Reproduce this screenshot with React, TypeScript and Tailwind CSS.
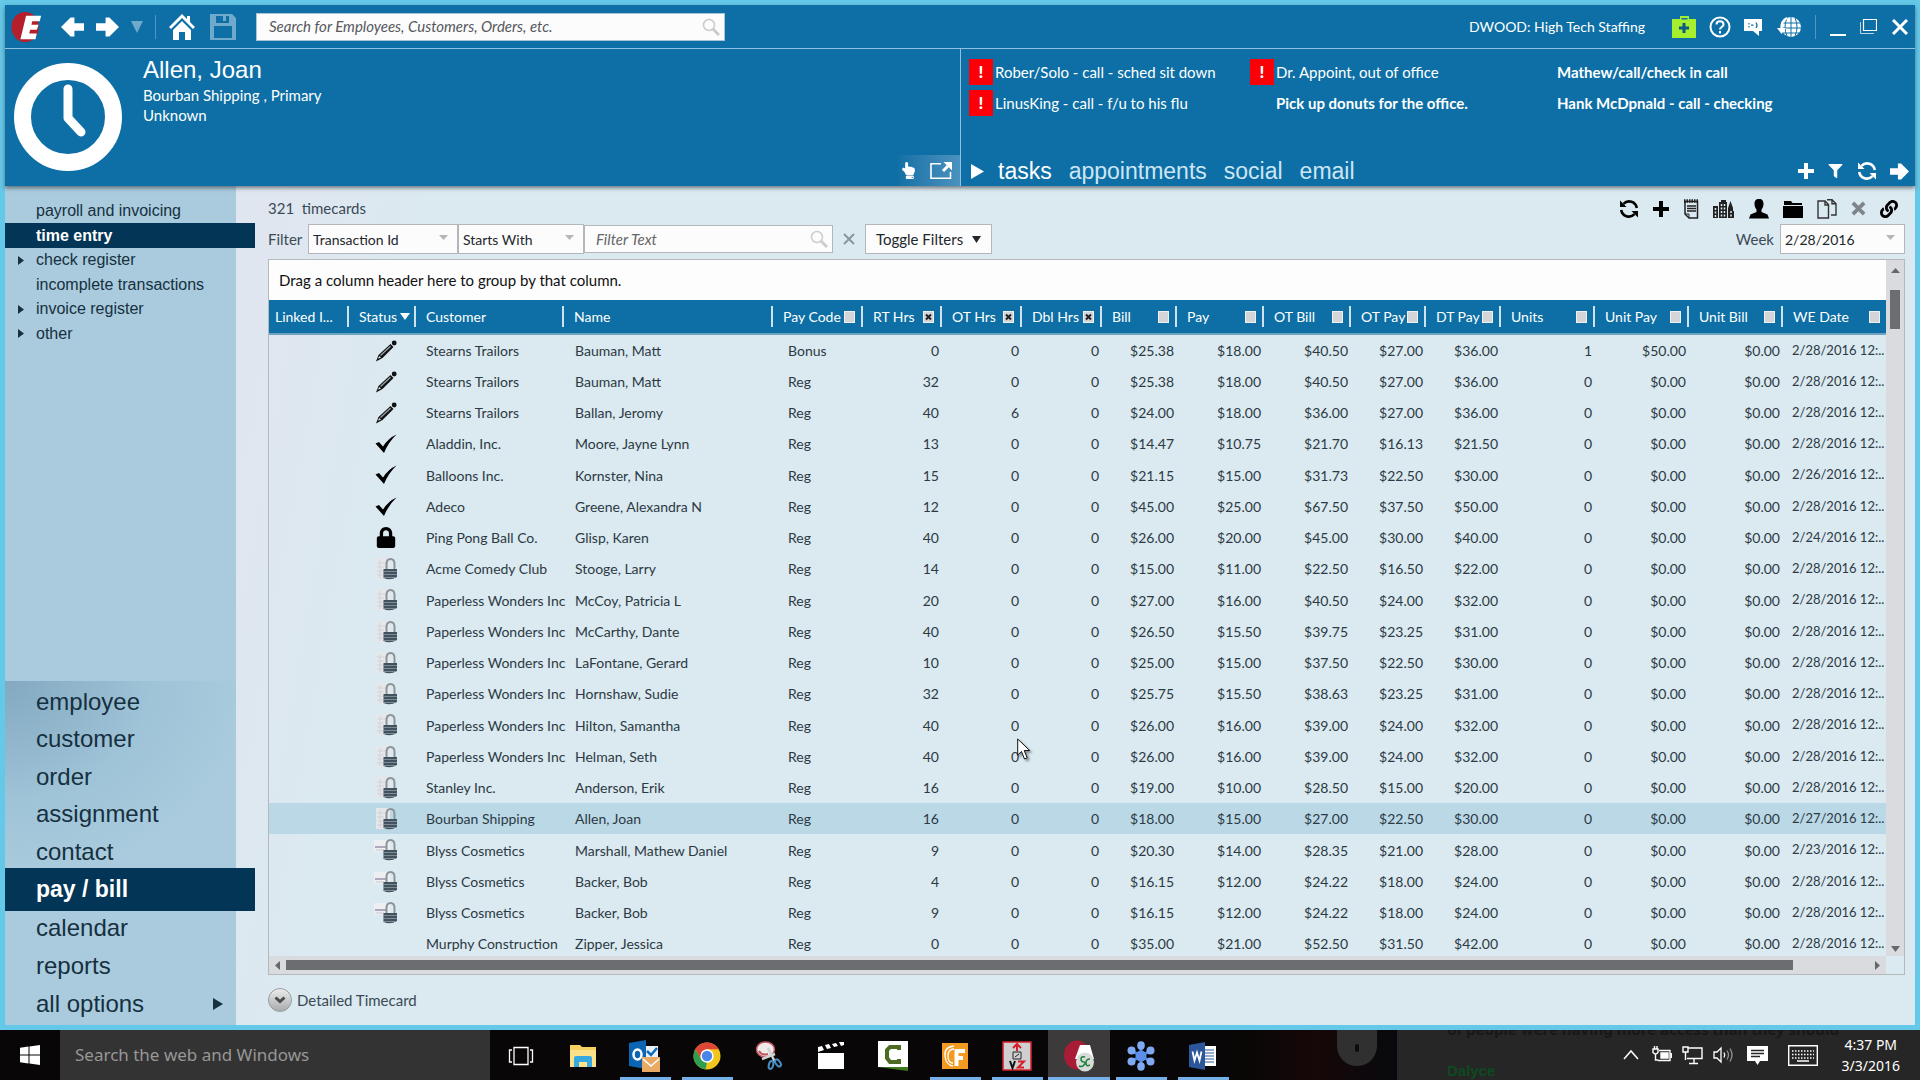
import React from "react";
import { FaFilter, FaFolder, FaHandPointUp, FaLink, FaLock } from "react-icons/fa";

type IconProps = { className?: string };

const ArrowLeft = ({ className }: IconProps) => (
  <svg viewBox="0 0 24 20" className={className} fill="currentColor" aria-hidden="true">
    <path d="M0 10 10 0h4v6h10v8H14v6h-4z" />
  </svg>
);
const ArrowRight = ({ className }: IconProps) => (
  <svg viewBox="0 0 24 20" className={className} fill="currentColor" aria-hidden="true">
    <path d="M24 10 14 0h-4v6H0v8h10v6h4z" />
  </svg>
);
const TriDown = ({ className }: IconProps) => (
  <svg viewBox="0 0 10 8" className={className} fill="currentColor" aria-hidden="true" preserveAspectRatio="none">
    <path d="M0 0h10L5 8z" />
  </svg>
);
const TriRight = ({ className }: IconProps) => (
  <svg viewBox="0 0 8 10" className={className} fill="currentColor" aria-hidden="true" preserveAspectRatio="none">
    <path d="M0 0v10l8-5z" />
  </svg>
);
const Plus = ({ className }: IconProps) => (
  <svg viewBox="0 0 16 16" className={className} fill="currentColor" aria-hidden="true">
    <path d="M6 0h4v6h6v4h-6v6H6v-6H0V6h6z" />
  </svg>
);
const Sync = ({ className }: IconProps) => (
  <svg viewBox="0 0 20 20" className={className} fill="none" stroke="currentColor" strokeWidth="2.6" aria-hidden="true">
    <path d="M4.500 4.800A7.800 7.800 0 0 1 17.800 9" />
    <path d="M15.500 15.200A7.800 7.800 0 0 1 2.200 11" />
    <path d="M1 1.500v6.500h6.500z" fill="currentColor" stroke="none" />
    <path d="M19 18.500v-6.500h-6.500z" fill="currentColor" stroke="none" />
  </svg>
);
const Magnifier = ({ className }: IconProps) => (
  <svg viewBox="0 0 18 18" className={className} fill="none" stroke="currentColor" aria-hidden="true">
    <circle cx="7" cy="7" r="5.500" strokeWidth="1.500" />
    <path d="m11 11 6 6" strokeWidth="3" />
  </svg>
);

function EmpireLogo() {
  return (
    <svg viewBox="0 0 34 34" className="h-8 w-8" aria-hidden="true">
      <ellipse cx="15" cy="17" rx="14.500" ry="16" fill="#b3202c" />
      <path d="M16 5h16l-1.500 6h-8l-.8 3.500h7.500L27.500 20h-7.200l-.9 4h8L26 30H10z" fill="#fff" />
    </svg>
  );
}

function HomeIcon() {
  return (
    <svg viewBox="0 0 28 28" className="h-7 w-7" fill="#fff" aria-hidden="true">
      <path d="M14 1 1 14l2 2L14 5l11 11 2-2-5-5V3h-3v3z" />
      <path d="m14 8-9 9v10h6v-8h6v8h6V17z" />
    </svg>
  );
}

function SaveIcon() {
  return (
    <svg viewBox="0 0 26 26" className="h-[26px] w-[26px]" aria-hidden="true">
      <path fillRule="evenodd" d="M0 0h22l4 4v22H0zM6 2v7h13V2h-3v5h-3V2zM4 12v12h18V12z" fill="#6fa9cb" />
    </svg>
  );
}

function ClockIcon() {
  return (
    <svg viewBox="0 0 108 108" className="h-[108px] w-[108px]" fill="none" stroke="#fff" aria-hidden="true">
      <circle cx="54" cy="54" r="45.500" strokeWidth="17" />
      <path d="M54 26v29l13 14" strokeWidth="9" strokeLinecap="round" strokeLinejoin="round" />
    </svg>
  );
}

const iconBtn = "flex items-center justify-center";

function TitleBar() {
  return (
    <div className="flex h-11 items-center border-b border-[#8fc0dc] pr-[7px] pl-[6px] text-white">
      <EmpireLogo />
      <button aria-label="Back" className={`${iconBtn} ml-[18px]`}><ArrowLeft className="h-5 w-[23px]" /></button>
      <button aria-label="Forward" className={`${iconBtn} ml-3`}><ArrowRight className="h-5 w-[23px]" /></button>
      <button aria-label="History" className={`${iconBtn} ml-3 text-[#6fa9cb]`}><TriDown className="h-3 w-3" /></button>
      <span className="ml-3 h-6 w-px bg-[#4d97c0]" />
      <button aria-label="Home" className={`${iconBtn} ml-3`}><HomeIcon /></button>
      <button aria-label="Save" className={`${iconBtn} ml-[14px]`}><SaveIcon /></button>
      <label className="ml-5 flex h-7 w-[469px] items-center border border-[#a9c4d4] bg-[#fcfcfc] pr-1 pl-3 text-[#c9cbcf]">
        <input
          aria-label="Search"
          placeholder="Search for Employees, Customers, Orders, etc."
          className="min-w-0 flex-1 bg-transparent text-[15px] text-gray-700 italic outline-none placeholder:text-[#55585c]"
        />
        <Magnifier className="h-[18px] w-[18px]" />
      </label>
      <span className="ml-auto text-[14px]">DWOOD: High Tech Staffing</span>
      <button aria-label="Support kit" className={`${iconBtn} ml-[26px]`}>
        <svg viewBox="0 0 26 22" className="h-[22px] w-[26px]" aria-hidden="true">
          <path d="M1 3h8V0h9v3h7v19H1z" fill="#a5ef2f" />
          <path d="M10.500 2h6v1.500h-6z" fill="#0d6fa5" />
          <path d="M11.500 7h3v3.500H18v3h-3.500V17h-3v-3.500H8v-3h3.500z" fill="#0d5a85" />
        </svg>
      </button>
      <button aria-label="Help" className={`${iconBtn} ml-3`}>
        <svg viewBox="0 0 22 22" className="h-[22px] w-[22px]" fill="none" stroke="#fff" strokeWidth="2" aria-hidden="true">
          <circle cx="11" cy="11" r="9.500" />
          <path d="M7.500 8.500c0-4.500 7-4.500 7 0 0 2.500-3.500 2.500-3.500 5" />
          <path d="M11 15v2.500" />
        </svg>
      </button>
      <button aria-label="Chat" className={`${iconBtn} ml-3`}>
        <svg viewBox="0 0 20 18" className="h-[18px] w-5" aria-hidden="true">
          <path d="M1 1h18v12h-3v5l-6-5H1z" fill="#fff" />
          <path d="M6 5v1.500M6 8v1.500M8 7.200h2.500M13 4.500q2 2.700 0 5.500" stroke="#0d6fa5" fill="none" strokeWidth="1.200" />
        </svg>
      </button>
      <button aria-label="Web" className={`${iconBtn} ml-[14px]`}>
        <svg viewBox="0 0 24 22" className="h-[22px] w-6" aria-hidden="true">
          <circle cx="14" cy="11" r="10" fill="#fff" />
          <path d="M14 1v20M5 7h18M4 12h20M6 17h16M10 2q-4 9 0 18M18 2q4 9 0 18" stroke="#0d6fa5" fill="none" />
          <path d="M0 12h9l-4.500 6z" fill="#fff" />
          <path d="M4.500 13Q4 5 10 2" stroke="#fff" strokeWidth="2.500" fill="none" />
        </svg>
      </button>
      <span className="ml-[14px] h-6 w-px bg-[#4d97c0]" />
      <button aria-label="Minimize" className="ml-[14px] flex h-[18px] w-4 items-end"><span className="h-[2px] w-full bg-white" /></button>
      <button aria-label="Restore" className={`${iconBtn} ml-[14px]`}>
        <svg viewBox="0 0 17 15" className="h-[15px] w-[17px]" fill="none" stroke="#fff" aria-hidden="true">
          <path d="M3.500.5h13v11h-13z" strokeWidth="1.200" />
          <path d="M.5 3v11.500h13.500" opacity=".7" />
        </svg>
      </button>
      <button aria-label="Close" className={`${iconBtn} ml-[15px]`}>
        <svg viewBox="0 0 16 16" className="h-4 w-4" stroke="#fff" strokeWidth="3" aria-hidden="true"><path d="m1 1 14 14M15 1 1 15" /></svg>
      </button>
    </div>
  );
}

const tasks = [
  { text: "Rober/Solo - call - sched sit down", urgent: true, bold: false },
  { text: "Dr. Appoint, out of office", urgent: true, bold: false },
  { text: "Mathew/call/check in call", urgent: false, bold: true },
  { text: "LinusKing - call - f/u to his flu", urgent: true, bold: false },
  { text: "Pick up donuts for the office.", urgent: false, bold: true },
  { text: "Hank McDpnald - call - checking", urgent: false, bold: true },
];

function Header() {
  return (
    <header className="relative z-10 bg-[#0d6fa5] text-white shadow-[0_2px_4px_rgba(60,70,80,0.7)]">
      <TitleBar />
      <div className="flex h-[137px]">
        <section className="flex w-1/2 items-start pl-[9px]">
          <div className="pt-[14px]"><ClockIcon /></div>
          <div className="flex-1 pt-[6px] pl-[21px]">
            <h1 className="font-['Liberation_Sans',sans-serif] text-[24px] leading-[30px]">Allen, Joan</h1>
            <p className="text-[15px] leading-5">Bourban Shipping , Primary</p>
            <p className="text-[15px] leading-5">Unknown</p>
          </div>
          <div className="flex h-[31px] w-16 items-center justify-between self-end bg-linear-to-r from-[#0d6fa5] to-[#4a92bf] pr-2 pl-[5px]">
            <button aria-label="Select"><FaHandPointUp className="h-[17px] w-[15px]" /></button>
            <button aria-label="Open in new window">
              <svg viewBox="0 0 22 18" className="h-[18px] w-[22px]" fill="none" stroke="#fff" aria-hidden="true">
                <path d="M11 1.700H1v14.500h19.500V10" strokeWidth="1.600" />
                <path d="m13 9 5-5" strokeWidth="3" />
                <path d="M13.500 0H22v8.500z" fill="#fff" stroke="none" />
              </svg>
            </button>
          </div>
        </section>
        <section className="flex flex-1 flex-col border-l border-[#8fc0dc] pl-2">
          <ul className="grid grid-cols-[281px_281px_1fr] gap-y-[5px] pt-[10px]">
            {tasks.map((t) => (
              <li key={t.text} className="flex h-[26px] items-center gap-[2px] text-[15px] whitespace-nowrap">
                {t.urgent ? (
                  <span className="flex h-[26px] w-6 items-center justify-center bg-[#fb0007] text-[17px] font-black">!</span>
                ) : (
                  <span className="w-6" />
                )}
                <span className={t.bold ? "font-bold" : ""}>{t.text}</span>
              </li>
            ))}
          </ul>
          <div className="mt-auto flex h-[30px] items-center pr-[6px] font-['Liberation_Sans',sans-serif] text-[23px] leading-[30px] text-[#cde6f5]">
            <button aria-label="Expand" className="mr-[14px] ml-[2px] text-white"><TriRight className="h-[15px] w-[13px]" /></button>
            <nav className="flex gap-[17px]">
              <a href="#tasks" className="text-white">tasks</a>
              <a href="#appointments">appointments</a>
              <a href="#social">social</a>
              <a href="#email">email</a>
            </nav>
            <div className="ml-auto flex items-center gap-[13px] text-white">
              <button aria-label="Add task"><Plus className="h-4 w-4" /></button>
              <button aria-label="Filter tasks"><FaFilter className="h-[14px] w-[17px]" /></button>
              <button aria-label="Refresh tasks"><Sync className="h-5 w-5" /></button>
              <button aria-label="Next"><ArrowRight className="h-[17px] w-[19px]" /></button>
            </div>
          </div>
        </section>
      </div>
    </header>
  );
}

const subNav = [
  { label: "payroll and invoicing", arrow: false },
  { label: "time entry", arrow: false, active: true },
  { label: "check register", arrow: true },
  { label: "incomplete transactions", arrow: false },
  { label: "invoice register", arrow: true },
  { label: "other", arrow: true },
];
const mainNav = ["employee", "customer", "order", "assignment", "contact", "pay / bill", "calendar", "reports", "all options"];

function Sidebar() {
  return (
    <aside className="flex w-[250px] flex-col bg-linear-to-r from-[#a9cbdd] from-[231px] to-transparent to-[231px] font-['Liberation_Sans',sans-serif] text-[#16303f]">
      <nav aria-label="Pay and bill" className="pt-[13px] text-[16px]">
        {subNav.map((s) => (
          <a
            key={s.label}
            href="#section"
            className={`flex items-center pl-[13px] even:h-[25px] odd:h-6 ${s.active ? "bg-[#033557] font-bold text-white" : ""}`}
          >
            <span className="w-[18px]">{s.arrow && <TriRight className="h-[9px] w-[6px]" />}</span>
            {s.label}
          </a>
        ))}
      </nav>
      <nav aria-label="Modules" className="mt-auto text-[24px]">
        <div className="w-[231px] bg-[radial-gradient(ellipse_at_top_left,#82a9c1_0%,#9fc3d7_45%,transparent_75%)]">
          {mainNav.slice(0, 5).map((m) => (
            <a key={m} href="#module" className="flex items-center pt-1 pl-[31px] even:h-[38px] odd:h-[37px]">{m}</a>
          ))}
        </div>
        <a href="#module" className="flex h-[43px] items-center bg-[#033557] pl-[31px] text-[23px] font-bold text-white">{mainNav[5]}</a>
        {mainNav.slice(6).map((m) => (
          <a key={m} href="#module" className="flex h-[38px] items-center justify-between pr-8 pb-1 pl-[31px]">
            {m}
            {m === "all options" && <TriRight className="h-3 w-[10px]" />}
          </a>
        ))}
      </nav>
    </aside>
  );
}

function Dropdown({ label, value, box }: { label: string; value: string; box: string }) {
  return (
    <span className={`relative flex h-[30px] ${box}`}>
      <select aria-label={label} className="w-full appearance-none border border-[#b4b7ba] bg-[#fcfcfc] pl-1 text-[14px] text-[#22272b]">
        <option>{value}</option>
      </select>
      <TriDown className="pointer-events-none absolute top-[11px] right-[10px] h-[5px] w-[9px] text-[#b5b5b5]" />
    </span>
  );
}

function Toolbar() {
  return (
    <div className="flex w-[279px] items-center justify-between text-black">
      <button aria-label="Refresh"><Sync className="h-5 w-5" /></button>
      <button aria-label="Add"><Plus className="h-4 w-4" /></button>
      <button aria-label="Notes">
        <svg viewBox="0 0 16 20" className="h-5 w-4" fill="none" stroke="#222" aria-hidden="true">
          <path d="M2 2.500h12.500v16.500H6L2 15z" strokeWidth="1.500" />
          <path d="M1 2h14" strokeWidth="3.500" strokeDasharray="1.500 1" />
          <path d="M4 7h9M4 9.500h9M4 12h9" strokeWidth="1.400" />
          <path d="M2 15h4v4" />
        </svg>
      </button>
      <button aria-label="Companies">
        <svg viewBox="0 0 21 20" className="h-5 w-[21px]" aria-hidden="true">
          <path d="M0 7h5v12H0zM6 3h2V1h5v2h1v16H6zM15 9l2.500-7L20 9v3h1v7h-6z" fill="#222" />
          <path d="M2.500 9v9M8.500 5v13M11.500 5v13M18 12v6" stroke="#dbe9f0" strokeWidth="1.500" strokeDasharray="2 1.500" />
        </svg>
      </button>
      <button aria-label="Employee">
        <svg viewBox="0 0 20 20" className="h-5 w-5" aria-hidden="true">
          <path d="M10 0c3.500 0 4.500 2 4.500 5 0 2.500-1 4.500-2 5.500v2.500l6 2.500 1.500 4H0l1.500-4 6-2.500v-2.500c-1-1-2-3-2-5.500 0-3 1-5 4.500-5z" />
        </svg>
      </button>
      <button aria-label="Folder">
        <svg viewBox="0 0 20 18" className="h-[18px] w-5" aria-hidden="true">
          <path d="M1 1h7l1.500 2H19v2H1zM0 6h20v12H0z" />
        </svg>
      </button>
      <button aria-label="Copy">
        <svg viewBox="0 0 20 20" className="h-5 w-5" fill="none" stroke="#333" strokeWidth="1.400" aria-hidden="true">
          <path d="M1 2h7l3.500 3.500V19H1zM8 2v4h3.500" />
          <path d="M10 .8h5l4 4V16h-5M15 .8v4h4" />
        </svg>
      </button>
      <button aria-label="Delete" className="text-[#7e8589]">
        <svg viewBox="0 0 16 16" className="h-[15px] w-[15px]" stroke="currentColor" strokeWidth="4" aria-hidden="true"><path d="m2 2 12 12M14 2 2 14" /></svg>
      </button>
      <button aria-label="Link"><FaLink className="h-[18px] w-[18px]" /></button>
    </div>
  );
}

type Col = { title: string; width: number; box?: "on" | "off"; sort?: boolean };
const columns: Col[] = [
  { title: "Linked I...", width: 80 },
  { title: "Status", width: 67, sort: true },
  { title: "Customer", width: 148 },
  { title: "Name", width: 209 },
  { title: "Pay Code", width: 90, box: "off" },
  { title: "RT Hrs", width: 79, box: "on" },
  { title: "OT Hrs", width: 80, box: "on" },
  { title: "Dbl Hrs", width: 80, box: "on" },
  { title: "Bill", width: 75, box: "off" },
  { title: "Pay", width: 87, box: "off" },
  { title: "OT Bill", width: 87, box: "off" },
  { title: "OT Pay", width: 75, box: "off" },
  { title: "DT Pay", width: 75, box: "off" },
  { title: "Units", width: 94, box: "off" },
  { title: "Unit Pay", width: 94, box: "off" },
  { title: "Unit Bill", width: 94, box: "off" },
  { title: "WE Date", width: 103, box: "off" },
];

// status | customer | name | code | rt | ot | dbl | bill | pay | ot bill | ot pay | dt pay | units | unit pay | unit bill | date
const rows = `edit|Stearns Trailors|Bauman, Matt|Bonus|0|0|0|$25.38|$18.00|$40.50|$27.00|$36.00|1|$50.00|$0.00|2/28/2016 12:..
edit|Stearns Trailors|Bauman, Matt|Reg|32|0|0|$25.38|$18.00|$40.50|$27.00|$36.00|0|$0.00|$0.00|2/28/2016 12:..
edit|Stearns Trailors|Ballan, Jeromy|Reg|40|6|0|$24.00|$18.00|$36.00|$27.00|$36.00|0|$0.00|$0.00|2/28/2016 12:..
check|Aladdin, Inc.|Moore, Jayne Lynn|Reg|13|0|0|$14.47|$10.75|$21.70|$16.13|$21.50|0|$0.00|$0.00|2/28/2016 12:..
check|Balloons Inc.|Kornster, Nina|Reg|15|0|0|$21.15|$15.00|$31.73|$22.50|$30.00|0|$0.00|$0.00|2/26/2016 12:..
check|Adeco|Greene, Alexandra N|Reg|12|0|0|$45.00|$25.00|$67.50|$37.50|$50.00|0|$0.00|$0.00|2/28/2016 12:..
lock|Ping Pong Ball Co.|Glisp, Karen|Reg|40|0|0|$26.00|$20.00|$45.00|$30.00|$40.00|0|$0.00|$0.00|2/24/2016 12:..
page|Acme Comedy Club|Stooge, Larry|Reg|14|0|0|$15.00|$11.00|$22.50|$16.50|$22.00|0|$0.00|$0.00|2/28/2016 12:..
page|Paperless Wonders Inc|McCoy, Patricia L|Reg|20|0|0|$27.00|$16.00|$40.50|$24.00|$32.00|0|$0.00|$0.00|2/28/2016 12:..
page|Paperless Wonders Inc|McCarthy, Dante|Reg|40|0|0|$26.50|$15.50|$39.75|$23.25|$31.00|0|$0.00|$0.00|2/28/2016 12:..
page|Paperless Wonders Inc|LaFontane, Gerard|Reg|10|0|0|$25.00|$15.00|$37.50|$22.50|$30.00|0|$0.00|$0.00|2/28/2016 12:..
page|Paperless Wonders Inc|Hornshaw, Sudie|Reg|32|0|0|$25.75|$15.50|$38.63|$23.25|$31.00|0|$0.00|$0.00|2/28/2016 12:..
page|Paperless Wonders Inc|Hilton, Samantha|Reg|40|0|0|$26.00|$16.00|$39.00|$24.00|$32.00|0|$0.00|$0.00|2/28/2016 12:..
page|Paperless Wonders Inc|Helman, Seth|Reg|40|0|0|$26.00|$16.00|$39.00|$24.00|$32.00|0|$0.00|$0.00|2/28/2016 12:..
page|Stanley Inc.|Anderson, Erik|Reg|16|0|0|$19.00|$10.00|$28.50|$15.00|$20.00|0|$0.00|$0.00|2/28/2016 12:..
page|Bourban Shipping|Allen, Joan|Reg|16|0|0|$18.00|$15.00|$27.00|$22.50|$30.00|0|$0.00|$0.00|2/27/2016 12:..
check-page|Blyss Cosmetics|Marshall, Mathew Daniel|Reg|9|0|0|$20.30|$14.00|$28.35|$21.00|$28.00|0|$0.00|$0.00|2/23/2016 12:..
check-page|Blyss Cosmetics|Backer, Bob|Reg|4|0|0|$16.15|$12.00|$24.22|$18.00|$24.00|0|$0.00|$0.00|2/28/2016 12:..
check-page|Blyss Cosmetics|Backer, Bob|Reg|9|0|0|$16.15|$12.00|$24.22|$18.00|$24.00|0|$0.00|$0.00|2/28/2016 12:..
|Murphy Construction|Zipper, Jessica|Reg|0|0|0|$35.00|$21.00|$52.50|$31.50|$42.00|0|$0.00|$0.00|2/28/2016 12:..`
  .split("\n")
  .map((line) => line.split("|"));

function StatusIcon({ kind }: { kind: string }) {
  if (kind === "edit")
    return (
      <svg viewBox="0 0 22 22" className="h-[22px] w-[22px]" aria-hidden="true">
        <path d="M1 21.500 3.500 15 15.500 4 18.500 7 7.500 18z" fill="#111" />
        <path d="m5.500 15.500 10-9.300" stroke="#9aa6ac" strokeWidth="1.200" />
        <path d="m3 18.500 1.200-2.500 1.800 1.800z" fill="#dbe9f0" />
        <circle cx="19.200" cy="3" r="2.400" fill="#111" />
      </svg>
    );
  if (kind === "check")
    return (
      <svg viewBox="0 0 22 20" className="h-5 w-[22px]" aria-hidden="true">
        <path d="M.5 9.500 4 8l4 4.500Q13.500 4 21.500.5 13.500 8 9 19z" />
      </svg>
    );
  if (kind === "lock") return <FaLock className="h-[21px] w-[22px] text-black" />;
  if (kind === "") return null;
  return (
    <svg viewBox="0 0 24 24" className="h-6 w-6" fill="none" aria-hidden="true">
      {kind === "page" ? (
        <>
          <path d="M2 1h14v21H2z" fill="#e6e7ea" />
          <path d="M3 6h9M3 10h7M3 14h6M3 18h6M6 3v18" stroke="#d0d4d8" />
        </>
      ) : (
        <>
          <path d="M0 2h16v12H0z" fill="#edeef2" />
          <path d="M1 9h11" stroke="#9a8fa8" strokeWidth="1.500" />
          <path d="M2 12h8" stroke="#c9ccd2" />
        </>
      )}
      <path d="M12.500 13V7q0-5 4-5t4 5v6" stroke="#8c9499" strokeWidth="2" />
      <path d="M9.500 12H23v8q-7 4-13.500 1z" fill="#42535f" />
      <path d="M10 14.500h13M10 17.500h13M10 20.500h12" stroke="#7d8c97" />
    </svg>
  );
}

function HeaderBox({ title, checked }: { title: string; checked: boolean }) {
  return (
    <span className="relative ml-auto h-3 w-[11px] shrink-0">
      <input
        type="checkbox"
        aria-label={`Total ${title}`}
        defaultChecked={checked}
        className="block h-3 w-[11px] appearance-none border border-[#eef0f2] bg-[#d3d5d8]"
      />
      {checked && (
        <svg viewBox="0 0 11 12" className="pointer-events-none absolute inset-0 h-3 w-[11px]" stroke="#222" strokeWidth="2" aria-hidden="true">
          <path d="m3 3.500 5 5M8 3.500l-5 5" />
        </svg>
      )}
    </span>
  );
}

const total = columns.reduce((sum, c) => sum + c.width, 0);

function Grid() {
  return (
    <div className="flex min-h-0 flex-1 flex-col border border-[#b4b9bc]">
      <div className="flex min-h-0 flex-1">
        <div className="min-w-0 flex-1 overflow-hidden">
          <p className="flex h-10 items-center bg-[#fdfdfd] pl-[10px] text-[15px] text-[#111]">
            Drag a column header here to group by that column.
          </p>
          <table className="w-full table-fixed border-collapse text-[14px]">
            <colgroup>
              {columns.map((c) => (
                <col key={c.title} style={{ width: `${(c.width / total) * 100}%` }} />
              ))}
            </colgroup>
            <thead>
              <tr className="h-[34px] border-b-2 border-[#6fa3c2] bg-[#0d6fa5] text-white">
                {columns.map((c, i) => (
                  <th key={c.title} className="p-0 text-left font-normal">
                    <span
                      className={`flex h-[21px] items-center pr-[6px] whitespace-nowrap ${i === 0 ? "pl-[6px]" : "pl-[10px]"} ${
                        i < columns.length - 1 ? "border-r-2 border-[#cfe3ef]" : ""
                      }`}
                    >
                      {c.title}
                      {c.sort && <TriDown className="ml-[3px] h-[7px] w-[10px] shrink-0" />}
                      {c.box && <HeaderBox title={c.title} checked={c.box === "on"} />}
                    </span>
                  </th>
                ))}
              </tr>
            </thead>
            <tbody className="text-[#2b3a44]">
              {rows.map((r, i) => (
                <tr key={i} className={`h-[31px] [&:nth-child(4n+1)]:h-8 ${i === 15 ? "bg-[#bbd8e6]" : ""}`}>
                  <td />
                  <td className="p-0">
                    <span className="flex justify-center pl-[6px]"><StatusIcon kind={r[0]} /></span>
                  </td>
                  <td className="p-0 pl-[10px] whitespace-nowrap">{r[1]}</td>
                  <td className="truncate p-0 pl-[11px]">{r[2]}</td>
                  <td className="truncate p-0 pl-[15px]">{r[3]}</td>
                  {r.slice(4, 15).map((v, j) => (
                    <td key={j} className="p-0 pr-[3px] text-right">{v}</td>
                  ))}
                  <td className="p-0 pl-[9px] text-[13px] whitespace-nowrap">{r[15]}</td>
                </tr>
              ))}
            </tbody>
          </table>
        </div>
        <div className="flex w-[18px] flex-col items-center bg-[#d9dbdf] pt-2 pb-1 text-[#66696c]">
          <TriDown className="h-[5px] w-[9px] rotate-180" />
          <div className="mt-[17px] h-[39px] w-[10px] bg-[#6b6d70]" />
          <TriDown className="mt-auto h-[6px] w-[9px]" />
        </div>
      </div>
      <div className="flex h-[18px]">
        <div className="flex flex-1 items-center bg-[#d9dbdf] pr-[6px] pl-[6px] text-[#66696c]">
          <TriRight className="h-[9px] w-[5px] rotate-180" />
          <div className="mr-[82px] ml-[6px] h-[10px] flex-1 bg-[#6b6d70]" />
          <TriRight className="h-[9px] w-[5px]" />
        </div>
        <div className="w-[18px]" />
      </div>
    </div>
  );
}

function Main() {
  return (
    <main className="flex min-w-0 flex-1 flex-col pr-[10px] pl-[13px] text-[#3a4a56]">
      <div className="flex h-[38px] items-center justify-between pt-[7px] pr-[7px] text-[15px]">
        <p className="whitespace-pre">321  timecards</p>
        <Toolbar />
      </div>
      <div className="flex h-[30px] items-center text-[15px]">
        <span className="w-10">Filter</span>
        <Dropdown label="Filter column" value="Transaction Id" box="w-[150px]" />
        <Dropdown label="Filter operator" value="Starts With" box="w-[126px]" />
        <label className="flex h-7 w-[249px] items-center border border-[#b4b7ba] bg-[#fcfcfc] pr-1 pl-[11px] text-[#cbcdcf]">
          <input
            aria-label="Filter Text"
            placeholder="Filter Text"
            className="min-w-0 flex-1 bg-transparent text-[15px] text-gray-700 italic outline-none placeholder:text-[#666]"
          />
          <Magnifier className="h-[18px] w-[18px]" />
        </label>
        <button aria-label="Clear filter" className="ml-[10px]">
          <svg viewBox="0 0 12 12" className="h-3 w-3" stroke="#8b979e" strokeWidth="2" aria-hidden="true"><path d="m1 1 10 10M11 1 1 11" /></svg>
        </button>
        <button className="ml-[10px] flex h-[30px] w-[127px] items-center justify-between border border-[#b4b7ba] bg-[#fcfcfc] pr-[10px] pl-[10px] text-[#22272b]">
          Toggle Filters
          <TriDown className="h-[7px] w-[9px]" />
        </button>
        <span className="mr-[6px] ml-auto">Week</span>
        <Dropdown label="Week" value="2/28/2016" box="w-[125px]" />
      </div>
      <div className="mt-[5px] flex min-h-0 flex-1"><Grid /></div>
      <div className="flex h-[50px] items-center gap-[5px] text-[15px]">
        <button aria-label="Expand detailed timecard" className="flex h-6 w-6 items-center justify-center rounded-full border border-[#9a9da0] bg-linear-to-b from-[#ececec] to-[#a9abad]">
          <svg viewBox="0 0 12 8" className="h-2 w-3" fill="none" stroke="#4a4d50" strokeWidth="3" aria-hidden="true"><path d="m1.500 1.500 4.500 4 4.500-4" /></svg>
        </button>
        Detailed Timecard
      </div>
    </main>
  );
}

type TaskbarApp = { name: string; running?: boolean; active?: boolean; icon: React.ReactNode };
const sz = "h-7 w-7";
const apps: TaskbarApp[] = [
  {
    name: "Task View",
    icon: (
      <svg viewBox="0 0 28 28" className={sz} fill="none" stroke="#fff" strokeWidth="1.300"><path d="M7 5.500h14v17H7zM5 8H2.500v12H5M23 8h2.500v12H23" /></svg>
    ),
  },
  {
    name: "File Explorer",
    icon: (
      <svg viewBox="0 0 28 28" className={sz}>
        <path d="M1 3h10l2 2h14v20H1z" fill="#f5cf62" />
        <path d="M1 8h26v17H1z" fill="#fce08a" />
        <path d="M5 25v-9q0-2 2-2h14q2 0 2 2v9h-5v-5h-8v5z" fill="#36a9e0" />
      </svg>
    ),
  },
  {
    name: "Outlook",
    running: true,
    icon: (
      <svg viewBox="0 0 32 32" className="h-8 w-8">
        <path d="M15 6h14v14H15z" fill="#e8f1fa" />
        <path d="m18 11 4 4 6-7" stroke="#0f6cbd" strokeWidth="2.500" fill="none" />
        <path d="M0 3 17 0v29L0 26z" fill="#0b64b4" />
        <ellipse cx="8.500" cy="14.500" rx="4" ry="5" stroke="#fff" strokeWidth="2.500" fill="none" />
        <path d="M13 17h18v15H13z" fill="#e9ab63" />
        <path d="m14 19 8 7 8-7" stroke="#fff" strokeWidth="1.500" fill="none" />
      </svg>
    ),
  },
  {
    name: "Chrome",
    running: true,
    icon: (
      <svg viewBox="0 0 28 28" className={sz}>
        <circle cx="14" cy="14" r="13.500" fill="#f2c51d" />
        <path d="M2.300 7.300A13.500 13.500 0 0 1 25.700 7.300H14L8.200 17.400z" fill="#de4635" />
        <path d="M2.300 7.300 8.200 17.400 14 20.700l-1.500 6.700A13.500 13.500 0 0 1 2.300 7.300z" fill="#2f9e53" />
        <circle cx="14" cy="14" r="6.700" fill="#fff" />
        <circle cx="14" cy="14" r="5.200" fill="#4a86e8" />
      </svg>
    ),
  },
  {
    name: "Snipping Tool",
    icon: (
      <svg viewBox="0 0 28 30" className="h-[30px] w-7" fill="none">
        <ellipse cx="10.500" cy="8.500" rx="9" ry="7.500" fill="#efeaea" stroke="#c0545c" strokeWidth="1.500" />
        <path d="m7 18 13-5M13 7l7 14" stroke="#cfd3d6" strokeWidth="2.500" />
        <path d="M4 10q3 5 9 3" stroke="#c0545c" strokeWidth="2" />
        <ellipse cx="16" cy="24" rx="2.200" ry="4" stroke="#4a8fc4" strokeWidth="2" transform="rotate(15 16 24)" />
        <ellipse cx="23" cy="22" rx="2.200" ry="4" stroke="#4a8fc4" strokeWidth="2" transform="rotate(-35 23 22)" />
      </svg>
    ),
  },
  {
    name: "Movies",
    icon: (
      <svg viewBox="0 0 28 28" className={sz} fill="#fff">
        <path d="M1 11h26v16H1z" />
        <path d="m1 5 4-1 2 4-6 2zM8 3l4-1 2 4-4 1zM15 2l4-1 2 3-4 1zM22 0l5-.5V3l-3 1z" />
      </svg>
    ),
  },
  {
    name: "Camtasia",
    icon: (
      <svg viewBox="0 0 30 30" className="h-[30px] w-[30px]">
        <path d="M0 0h30v26H0z" fill="#fff" />
        <path d="M0 26h30v4z" fill="#3f7a1d" />
        <path d="M21 9V6H12l-3 3v8l3 4h9v-3" fill="none" stroke="#4d6b22" strokeWidth="4" />
      </svg>
    ),
  },
  {
    name: "Fuse",
    running: true,
    icon: (
      <svg viewBox="0 0 26 28" className="h-7 w-[26px]" fill="none">
        <path d="M0 1h26v26H0z" fill="#f39a22" />
        <path d="M12 4Q2 5 3 14t8 10M12 7q-6 0-6 7t5 7" stroke="#fff" strokeWidth="1.300" />
        <path d="M14.500 24V9H23M14.500 16H21" stroke="#fff" strokeWidth="4" />
      </svg>
    ),
  },
  {
    name: "VZ Access",
    running: true,
    icon: (
      <svg viewBox="0 0 30 30" className="h-[30px] w-[30px]" fill="none">
        <path d="M1 1h28v28H1z" fill="#cfcfd1" stroke="#d6202a" strokeWidth="1.500" />
        <path d="M15 10V4M11 7l4-4 4 4" stroke="#d6202a" strokeWidth="2" />
        <path d="M11 11h8v7h-8zM13 16l4-3" stroke="#222" />
        <path d="m8 20 2.500 7L13 20" stroke="#111" strokeWidth="2" />
        <path d="M16 20.500h6l-6 6h6" stroke="#d6202a" strokeWidth="2" />
      </svg>
    ),
  },
  {
    name: "Staffing Suite",
    running: true,
    active: true,
    icon: (
      <svg viewBox="0 0 32 32" className="h-8 w-8" fill="none">
        <ellipse cx="14" cy="15" rx="13" ry="14.500" fill="#a91c35" />
        <path d="M17 5h10l4 14H12z" fill="#fff" />
        <ellipse cx="22" cy="22" rx="9" ry="9.500" fill="#d8dcd9" />
        <path d="M22 17q-4-1-4 2t3 3-1 4q-2 1-4 0M27 19q-4 0-4 4t4 2" stroke="#23803c" strokeWidth="1.500" />
      </svg>
    ),
  },
  {
    name: "GoToMeeting",
    running: true,
    icon: (
      <svg viewBox="0 0 28 30" className="h-[30px] w-7" fill="#7ea9f2" stroke="#4d82e0" strokeWidth="3">
        <path d="M14 5v20M5 10l18 10M23 10 5 20" />
        <g stroke="none">
          <ellipse cx="14" cy="4.500" rx="3.800" ry="4.200" /><ellipse cx="14" cy="25.500" rx="3.800" ry="4.200" /><circle cx="4.500" cy="9.500" r="4" />
          <circle cx="23.500" cy="9.500" r="4" /><circle cx="4.500" cy="20.500" r="4" /><circle cx="23.500" cy="20.500" r="4" />
          <circle cx="14" cy="15" r="5.500" fill="#5c8fe8" />
        </g>
      </svg>
    ),
  },
  {
    name: "Word",
    running: true,
    icon: (
      <svg viewBox="0 0 28 28" className={sz}>
        <path d="M15 4h12v20H15z" fill="#fff" />
        <path d="M16 8h9M16 11h9M16 14h9M16 17h9M16 20h9" stroke="#2b5797" />
        <path d="M0 3 16 0v28L0 25z" fill="#2b579a" />
        <path d="m3.500 9.500 2 9 2.500-8 2.500 8 2-9" stroke="#fff" strokeWidth="1.800" fill="none" />
      </svg>
    ),
  },
];

function Taskbar() {
  return (
    <footer className="flex h-[50px] shrink-0 bg-[#080606] font-['Noto_Sans',sans-serif]">
      <button aria-label="Start" className="flex w-[60px] items-center justify-center">
        <svg viewBox="0 0 20 20" className="h-5 w-5" fill="#fff" aria-hidden="true"><path d="M0 2.800 8.500 1.600v8H0zM9.500 1.500 20 0v9.600H9.500zM0 10.500h8.500v8L0 17.300zM9.500 10.500H20V20L9.500 18.600z" /></svg>
      </button>
      <input
        aria-label="Search the web and Windows"
        placeholder="Search the web and Windows"
        className="w-[430px] bg-[#333] pl-[15px] text-[17px] text-white outline-none placeholder:text-[#979797]"
      />
      {apps.map((a) => (
        <button key={a.name} aria-label={a.name} className={`flex w-[62px] flex-col items-center ${a.active ? "bg-[#3d3a3b]" : ""}`}>
          <span className="flex flex-1 items-center pt-1">{a.icon}</span>
          <span className={`h-[3px] ${a.running ? "bg-[#76b0e8]" : ""} ${a.active ? "w-full" : "w-[51px]"}`} />
        </button>
      ))}
      <div className="flex flex-1 items-start justify-end overflow-hidden bg-linear-to-r from-[#080606] via-[#160708] to-[#08090d] pr-5">
        <span className="flex h-9 w-10 items-center justify-center rounded-t-lg rounded-b-full bg-[#303030]"><span className="h-2 w-1 rounded bg-[#0c0c0c]" /></span>
      </div>
      <div className="flex w-[523px] items-center overflow-hidden bg-[#262626] text-white">
        <div className="relative h-full w-[226px]">
          <p className="absolute -top-[11px] left-[50px] text-[15px] leading-5 font-bold whitespace-nowrap text-[#181818]">of people were having more access than they should</p>
          <p className="absolute top-[31px] left-[50px] font-['Liberation_Sans',sans-serif] text-[15px] leading-5 font-bold text-[#0d4a20]">Dalyce</p>
        </div>
        <button aria-label="Show hidden icons" className="mr-[13px]">
          <svg viewBox="0 0 16 12" className="h-3 w-4" fill="none" stroke="#fff" strokeWidth="1.500"><path d="m1 10 7-8 7 8" /></svg>
        </button>
        <svg viewBox="0 0 20 20" className="mr-[10px] h-5 w-5" fill="none" stroke="#fff" strokeWidth="1.400" aria-hidden="true">
          <path d="M7 5.500h11v10H6M19.500 8v5M1 4h5v3.500q-2.500 3-5 0zM2.500 1v3M5 1v3M3.500 9v6H6" />
          <path d="M9 8h7v5H9z" fill="#fff" />
        </svg>
        <svg viewBox="0 0 21 19" className="mr-[10px] h-[19px] w-[21px]" fill="none" stroke="#fff" strokeWidth="1.400" aria-hidden="true">
          <path d="M6 2h14v10.500H5M12 12.500V17M7 17.500h9M1 1h5v5H1zM3.500 6v8" />
        </svg>
        <svg viewBox="0 0 21 18" className="mr-[13px] h-[18px] w-[21px]" fill="none" stroke="#fff" strokeWidth="1.300" aria-hidden="true">
          <path d="M1 6h3l4-4v14l-4-4H1zM11 6.500q1.500 2.500 0 5" />
          <path d="M14 4.500q3 4.500 0 9M17 2.500q4 6.500 0 13" opacity=".5" />
        </svg>
        <svg viewBox="0 0 21 21" className="mr-5 h-[21px] w-[21px]" aria-hidden="true">
          <path d="M0 1h21v15H13l-2.500 4L8 16H0z" fill="#fff" />
          <path d="M4 5.500h13M4 8.500h13M4 11.500h9" stroke="#262626" strokeWidth="1.300" />
        </svg>
        <svg viewBox="0 0 30 21" className="h-[21px] w-[30px]" fill="none" stroke="#fff" aria-hidden="true">
          <path d="M.7.7h28.600v19.600H.7z" strokeWidth="1.400" />
          <path d="M4 6h22M4 9.500h22M4 13h22" strokeWidth="1.500" strokeDasharray="1.500 1.500" />
          <path d="M9 16h12" strokeWidth="1.500" />
        </svg>
        <time className="mr-5 ml-auto text-center text-[14px] leading-[21px]">4:37 PM<br />3/3/2016</time>
      </div>
    </footer>
  );
}

export default function App() {
  return (
    <div className="flex h-screen flex-col overflow-hidden bg-[#64c8e8] font-[Lato,sans-serif]">
      <div className="relative flex min-h-0 flex-1 flex-col border-5 border-[#64c8e8] bg-[linear-gradient(100deg,#dbe9f0_0%,#e0e6f0_14%,#dbe9f0_22%,#dbe9f0_100%)]">
        <Header />
        <div className="flex min-h-0 flex-1">
          <Sidebar />
          <Main />
        </div>
        <svg viewBox="0 0 14 22" className="pointer-events-none absolute top-[733px] left-[1012px] h-[22px] w-[14px] drop-shadow-[2px_2px_1px_rgba(0,0,0,0.4)]" aria-hidden="true">
          <path d="M.7 1v16l3.800-3.500L7.500 21l2.700-1.200-3-7.300h5.500z" fill="#fff" stroke="#111" />
        </svg>
      </div>
      <Taskbar />
    </div>
  );
}
